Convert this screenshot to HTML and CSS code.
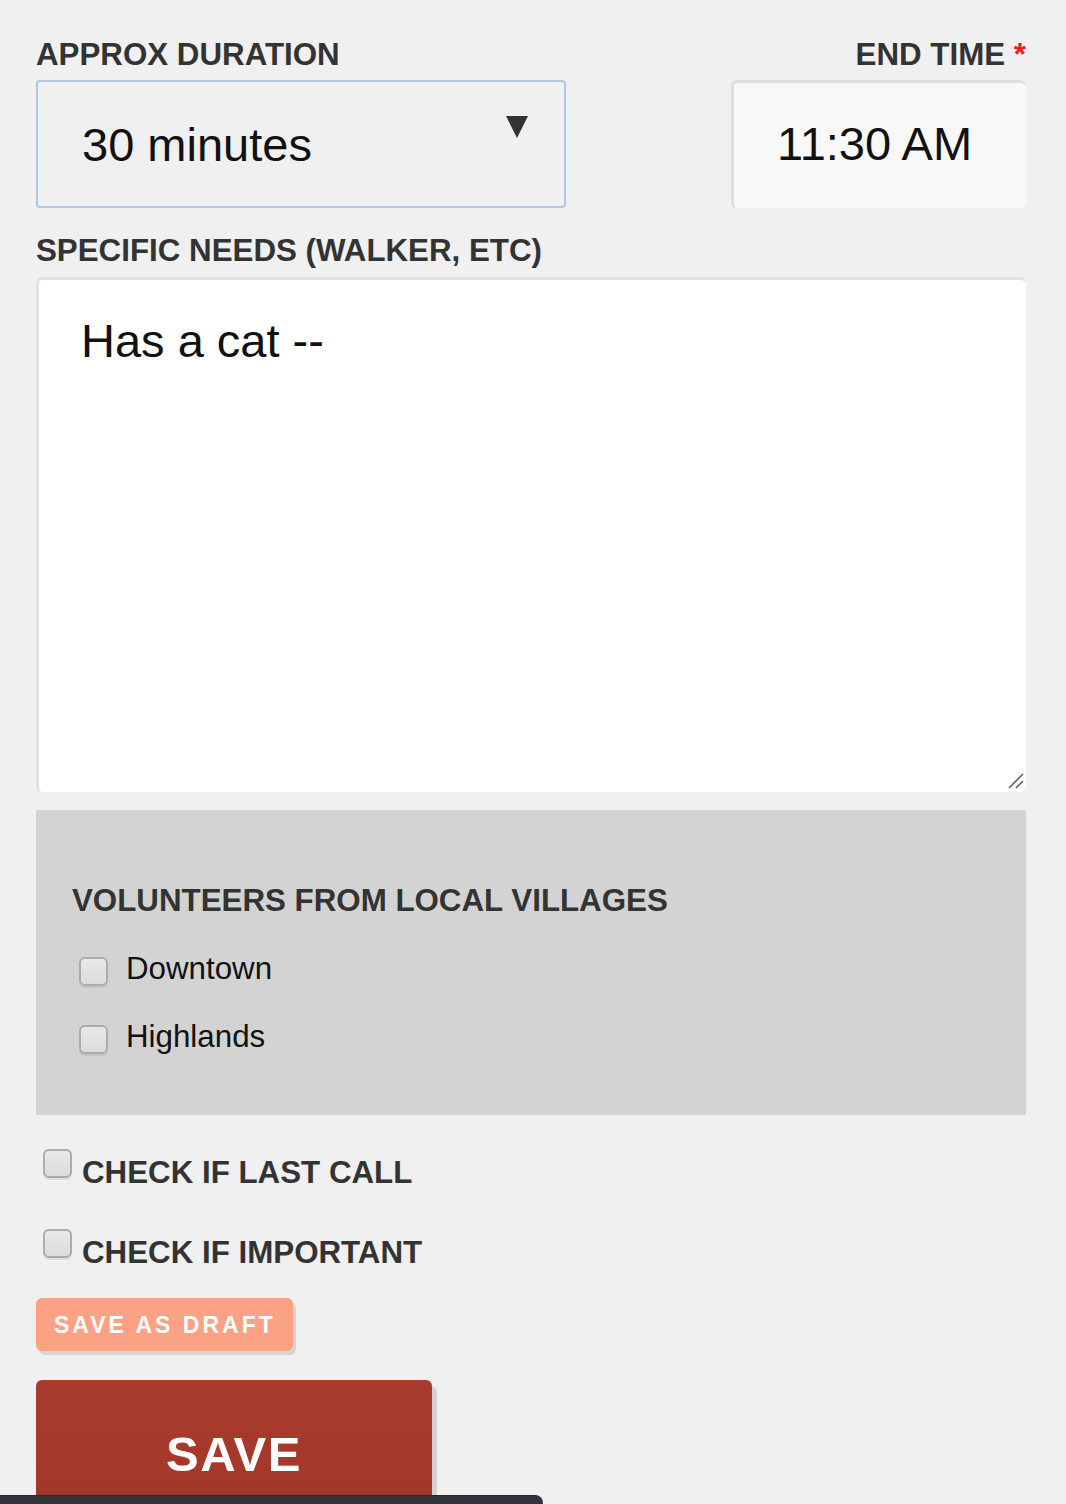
FILE: index.html
```html
<!DOCTYPE html>
<html lang="en">
<head>
    <meta charset="UTF-8">
    <meta name="viewport" content="width=device-width, initial-scale=1.0">
    <title>Call Details</title>
    <link rel="stylesheet" href="styles.css">
</head>
<body>

    <form class="call-form" onsubmit="return false">

        <div class="field-row">
            <div class="field duration">
                <label class="field-label" for="duration">Approx Duration</label>
                <div class="select-wrap">
                    <select id="duration" class="select-box">
                        <option>15 minutes</option>
                        <option selected>30 minutes</option>
                        <option>45 minutes</option>
                        <option>1 hour</option>
                    </select>
                    <svg class="select-arrow" width="22" height="22" viewBox="0 0 22 22">
                        <polygon points="0,0 22,0 11,22" fill="#333"/>
                    </svg>
                </div>
            </div>
            <div class="field end-time">
                <label class="field-label right" for="endTime">End Time <span class="required">*</span></label>
                <input type="text" id="endTime" class="time-box" value="11:30 AM" readonly>
            </div>
        </div>

        <label class="field-label needs-label" for="needs">Specific Needs (Walker, etc)</label>
        <div class="needs-wrap">
            <textarea id="needs" class="needs-box">Has a cat --</textarea>
            <svg class="grip" width="16" height="16" viewBox="0 0 16 16">
                <path d="M1 15 L15 1 M8 15 L15 8" stroke="#666" stroke-width="1.6" fill="none"/>
            </svg>
        </div>

        <div class="villages">
            <h3 class="villages-title">Volunteers From Local Villages</h3>
            <label class="village-option">
                <input type="checkbox" class="check"> Downtown
            </label>
            <label class="village-option">
                <input type="checkbox" class="check"> Highlands
            </label>
        </div>

        <label class="flag-option">
            <input type="checkbox" class="check">
            <span>Check if last call</span>
        </label>
        <label class="flag-option second">
            <input type="checkbox" class="check">
            <span>Check if important</span>
        </label>

        <button type="button" class="btn-draft">Save as draft</button>
        <button type="submit" class="btn-save">Save</button>

    </form>

    <div class="status-bar"></div>

</body>
</html>
```

FILE: styles.css
```css
body {
    margin: 0;
    padding: 37px 40px 0 36px;
    background-color: #f0f0f0;
    font-family: "Liberation Sans", Arial, sans-serif;
    color: #333;
}

.call-form {
    display: flex;
    flex-direction: column;
    align-items: flex-start;
}

.field-row {
    display: flex;
    justify-content: space-between;
    width: 100%;
}

.field {
    display: flex;
    flex-direction: column;
}

.duration {
    width: 530px;
}

.end-time {
    width: 295px;
}

.field-label {
    display: block;
    font-size: 31.3px;
    line-height: 36px;
    font-weight: bold;
    text-transform: uppercase;
    color: #333;
    margin-bottom: 7px;
}

.field-label.right {
    text-align: right;
}

.required {
    color: #ee1c25;
}

.select-wrap {
    position: relative;
}

.select-box {
    appearance: none;
    -webkit-appearance: none;
    width: 530px;
    height: 128px;
    box-sizing: border-box;
    padding: 0 80px 0 44px;
    border: 2px solid #aec8e6;
    border-radius: 4px;
    background: #f0f0f0;
    font-family: "Liberation Sans", Arial, sans-serif;
    font-size: 47px;
    color: #111;
    outline: none;
}

.select-arrow {
    position: absolute;
    top: 36px;
    right: 38px;
    pointer-events: none;
}

.time-box {
    width: 295px;
    height: 128px;
    box-sizing: border-box;
    padding: 0 0 4px 43px;
    border: none;
    border-top: 3px solid #dedede;
    border-left: 3px solid #dedede;
    border-radius: 6px;
    background: #f8f8f8;
    font-family: "Liberation Sans", Arial, sans-serif;
    font-size: 47px;
    color: #111;
    outline: none;
}

.needs-label {
    margin-top: 25px;
    margin-bottom: 8px;
}

.needs-wrap {
    position: relative;
    width: 990px;
    height: 515px;
}

.needs-box {
    display: block;
    width: 990px;
    height: 515px;
    box-sizing: border-box;
    padding: 33px 42px;
    border: none;
    border-top: 3px solid #e2e2e2;
    border-left: 3px solid #e2e2e2;
    border-radius: 6px;
    background: #ffffff;
    font-family: "Liberation Sans", Arial, sans-serif;
    font-size: 47px;
    color: #111;
    outline: none;
    resize: none;
}

.grip {
    position: absolute;
    right: 2px;
    bottom: 3px;
    pointer-events: none;
}

.villages {
    width: 990px;
    box-sizing: border-box;
    margin-top: 18px;
    padding: 73px 36px 60px;
    background: #d3d3d3;
}

.villages-title {
    margin: 0 0 32px;
    font-size: 31.3px;
    line-height: 36px;
    font-weight: bold;
    text-transform: uppercase;
    color: #333;
}

.village-option {
    display: flex;
    align-items: center;
    gap: 18px;
    height: 36px;
    font-size: 31.3px;
    color: #111;
}

.village-option + .village-option {
    margin-top: 32px;
}

.village-option .check {
    margin: 4px 0 0 7px;
}

.check {
    appearance: none;
    -webkit-appearance: none;
    width: 29px;
    height: 29px;
    margin: 0;
    flex-shrink: 0;
    border: 2px solid #acacac;
    border-radius: 6px;
    background: linear-gradient(#e9e9e9, #dcdcdc);
    box-shadow: 0 2px 0 rgba(0, 0, 0, 0.07);
}

.flag-option {
    display: flex;
    align-items: flex-start;
    gap: 10px;
    margin-top: 34px;
    font-size: 31.3px;
    line-height: 36px;
    font-weight: bold;
    text-transform: uppercase;
    color: #333;
}

.flag-option.second {
    margin-top: 38px;
}

.flag-option .check {
    margin-left: 7px;
}

.flag-option span {
    padding-top: 6px;
}

.btn-draft {
    margin-top: 27px;
    height: 53px;
    padding: 2px 17px 0 18px;
    border: none;
    border-radius: 6px;
    background: #fba184;
    color: #ffffff;
    font-family: "Liberation Sans", Arial, sans-serif;
    font-size: 23px;
    font-weight: bold;
    letter-spacing: 3px;
    text-transform: uppercase;
    box-shadow: 3px 4px 0 #d6d6d6;
    cursor: pointer;
}

.btn-save {
    margin-top: 29px;
    width: 396px;
    height: 150px;
    padding: 46px 0 0;
    border: none;
    border-radius: 6px;
    background: linear-gradient(#a93b2e, #a13628);
    color: #ffffff;
    font-family: "Liberation Sans", Arial, sans-serif;
    font-size: 49px;
    line-height: 56px;
    font-weight: bold;
    letter-spacing: 1.5px;
    text-transform: uppercase;
    box-shadow: 5px 6px 0 #d2d2d2;
    display: flex;
    justify-content: center;
    align-items: flex-start;
    cursor: pointer;
}

.status-bar {
    position: fixed;
    left: 0;
    bottom: 0;
    width: 543px;
    height: 8px;
    background: #32363a;
    border-top: 1px solid #26292c;
    border-top-right-radius: 8px;
}
```
